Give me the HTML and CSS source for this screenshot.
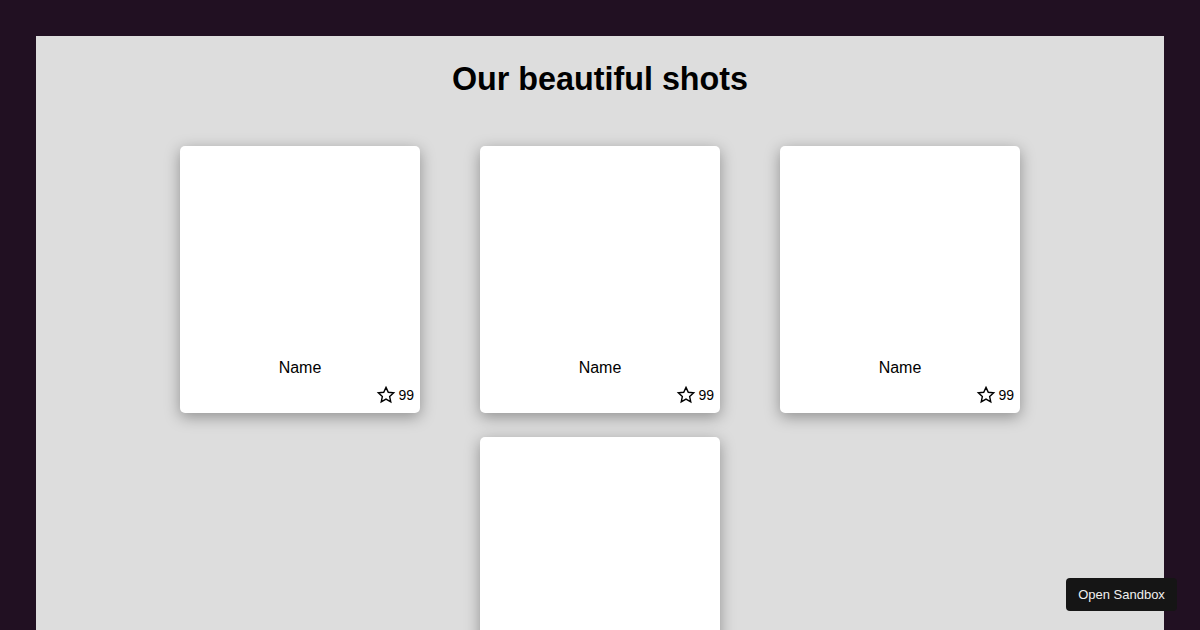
FILE: index.html
```html
<!DOCTYPE html>
<html lang="en">
<head>
  <meta charset="UTF-8" />
  <meta name="viewport" content="width=device-width, initial-scale=1" />
  <title>Our beautiful shots</title>
  <link rel="stylesheet" href="styles.css">
</head>
<body>
  <main class="page">
    <h1 class="title">Our beautiful shots</h1>

    <section class="shots">
      <article class="shot">
        <div class="shot-image"></div>
        <p class="shot-name">Name</p>
        <div class="shot-likes">
          <svg class="star" viewBox="0 0 24 24" width="20" height="20"><path d="M12 2.8l2.75 5.9 6.45.75-4.8 4.4 1.3 6.35L12 17l-5.7 3.2 1.3-6.35-4.8-4.4 6.45-.75z" fill="none" stroke="#000" stroke-width="1.7" stroke-linejoin="miter"/></svg>
          <span>99</span>
        </div>
      </article>
      <article class="shot">
        <div class="shot-image"></div>
        <p class="shot-name">Name</p>
        <div class="shot-likes">
          <svg class="star" viewBox="0 0 24 24" width="20" height="20"><path d="M12 2.8l2.75 5.9 6.45.75-4.8 4.4 1.3 6.35L12 17l-5.7 3.2 1.3-6.35-4.8-4.4 6.45-.75z" fill="none" stroke="#000" stroke-width="1.7" stroke-linejoin="miter"/></svg>
          <span>99</span>
        </div>
      </article>
      <article class="shot">
        <div class="shot-image"></div>
        <p class="shot-name">Name</p>
        <div class="shot-likes">
          <svg class="star" viewBox="0 0 24 24" width="20" height="20"><path d="M12 2.8l2.75 5.9 6.45.75-4.8 4.4 1.3 6.35L12 17l-5.7 3.2 1.3-6.35-4.8-4.4 6.45-.75z" fill="none" stroke="#000" stroke-width="1.7" stroke-linejoin="miter"/></svg>
          <span>99</span>
        </div>
      </article>
      <article class="shot">
        <div class="shot-image"></div>
        <p class="shot-name">Name</p>
        <div class="shot-likes">
          <svg class="star" viewBox="0 0 24 24" width="20" height="20"><path d="M12 2.8l2.75 5.9 6.45.75-4.8 4.4 1.3 6.35L12 17l-5.7 3.2 1.3-6.35-4.8-4.4 6.45-.75z" fill="none" stroke="#000" stroke-width="1.7" stroke-linejoin="miter"/></svg>
          <span>99</span>
        </div>
      </article>
    </section>
  </main>

  <button class="sandbox-btn">Open Sandbox</button>
</body>
</html>
```

FILE: styles.css
```css
* {
  box-sizing: border-box;
  margin: 0;
  padding: 0;
}

body {
  background-color: #211022;
  font-family: "Liberation Sans", Arial, sans-serif;
  color: #000;
  padding: 36px 36px 0;
  height: 630px;
  overflow: hidden;
}

.page {
  background-color: #dddddd;
  min-height: 700px;
  padding-top: 25px;
}

.title {
  text-align: center;
  font-size: 32.3px;
  font-weight: bold;
  line-height: 37px;
  margin-bottom: 48px;
}

.shots {
  display: grid;
  grid-template-columns: repeat(3, 240px);
  justify-content: center;
  column-gap: 60px;
  row-gap: 24px;
}

.shot {
  background-color: #fff;
  height: 267px;
  border-radius: 5px;
  box-shadow: 0 4px 15px rgba(0, 0, 0, 0.35);
  display: flex;
  flex-direction: column;
}

.shot:nth-child(4) {
  grid-column: 2;
}

.shot-image {
  flex: 1;
}

.shot-name {
  text-align: center;
  font-size: 16px;
  line-height: 18px;
  margin-bottom: 8px;
}

.shot-likes {
  display: flex;
  justify-content: flex-end;
  align-items: center;
  gap: 2px;
  font-size: 14px;
  height: 20px;
  padding-right: 6px;
  margin-bottom: 8px;
}

.star {
  display: block;
}

.sandbox-btn {
  position: fixed;
  right: 23px;
  bottom: 19px;
  width: 111px;
  height: 33px;
  background-color: #151515;
  color: #f0f0f0;
  border: none;
  border-radius: 4px;
  font-family: "Liberation Sans", Arial, sans-serif;
  font-size: 13px;
}
```
